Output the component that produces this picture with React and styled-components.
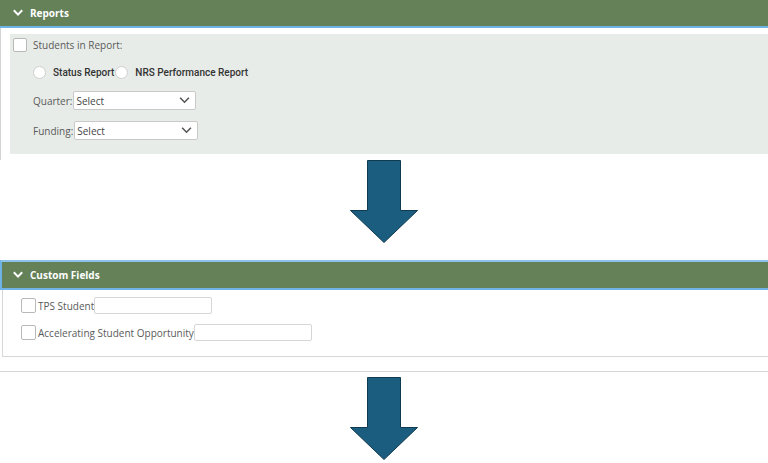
import styled, { createGlobalStyle } from 'styled-components'

const GlobalStyle = createGlobalStyle`
    *, *::before, *::after {
        box-sizing: border-box;
    }
    html, body {
        margin: 0;
        padding: 0;
        background: #ffffff;
    }
    body {
        font-family: "Open Sans", "Liberation Sans", sans-serif;
        color: #555;
    }
`

const Page = styled.div`
    width: 768px;
    height: 463px;
    overflow: hidden;
    display: flex;
    flex-direction: column;
`

const Section = styled.section`
    display: flex;
    flex-direction: column;
`

const Header = styled.div`
    height: ${(props) => (props.framed ? 30 : 28)}px;
    display: flex;
    align-items: center;
    gap: 7px;
    padding-left: ${(props) => (props.framed ? 11 : 13)}px;
    background-color: #648158;
    color: #ffffff;
    font-size: 10px;
    font-weight: 700;
    border-bottom: 2px solid #6fb3e6;
    border-top: ${(props) => (props.framed ? '2px solid #8cc2ea' : 'none')};
    border-left: ${(props) => (props.framed ? '2px solid #6fb3e6' : 'none')};
`

const ReportsBody = styled.div`
    height: 132px;
    padding: 6px 0 0 9px;
    border-left: 1px solid #d4d4d4;
`

const Panel = styled.div`
    background-color: #e8ece8;
    padding: 3px 0 14px 3px;
    display: flex;
    flex-direction: column;
`

const Row = styled.div`
    display: flex;
    align-items: center;
    height: ${(props) => props.h || 19}px;
    margin-top: ${(props) => props.mt || 0}px;
    padding-left: ${(props) => props.indent || 0}px;
    gap: ${(props) => props.gap || 0}px;
`

const Check = styled.span`
    width: ${(props) => props.size || 14}px;
    height: ${(props) => props.size || 14}px;
    background: #ffffff;
    border: 1px solid #b9b9b9;
    border-radius: 2px;
    flex-shrink: 0;
`

const Label = styled.span`
    font-size: 10px;
    color: #5a5a5a;
    white-space: nowrap;
    margin-left: ${(props) => props.ml || 0}px;
`

const Radio = styled.span`
    width: 13px;
    height: 13px;
    border-radius: 50%;
    background: #ffffff;
    border: 1px solid #cfcfcf;
    flex-shrink: 0;
`

const RadioLabel = styled.span`
    font-family: Roboto, "Liberation Sans", sans-serif;
    font-size: 10px;
    font-weight: 500;
    color: #333;
    margin: 0 1px 0 7px;
    white-space: nowrap;
`

const Select = styled.div`
    width: ${(props) => props.w || 123}px;
    height: 19px;
    background: #ffffff;
    border: 1px solid #c9c9c9;
    border-radius: 2px;
    display: flex;
    align-items: center;
    justify-content: space-between;
    padding: 0 5px 0 2px;
    font-size: 10px;
    color: #444;
`

const ArrowBox = styled.div`
    display: flex;
    justify-content: center;
    align-items: flex-start;
    height: ${(props) => props.h}px;
    margin-top: ${(props) => props.mt || 0}px;
`

const CustomBody = styled.div`
    height: 67px;
    margin-left: 2px;
    border-left: 1px solid #d8d8d8;
    border-bottom: 1px solid #d8d8d8;
    padding: 7px 0 0 18px;
    display: flex;
    flex-direction: column;
    gap: 10px;
`

const TextInput = styled.span`
    width: 118px;
    height: 17px;
    background: #ffffff;
    border: 1px solid #d6d6d6;
    border-radius: 2px;
`

const Divider = styled.div`
    margin-top: 14px;
    height: 1px;
    flex-shrink: 0;
    background: #d6d6d6;
`

const Chevron = ({ size = 10, color = '#fff', width = 2 }) => (
    <svg width={size} height={size} viewBox="0 0 10 10">
        <path d="M1.5 3 L5 6.6 L8.5 3" fill="none" stroke={color} strokeWidth={width} strokeLinecap="square" />
    </svg>
)

const Arrow = () => (
    <svg width="69" height="84" viewBox="0 0 69 84">
        <path d="M17.5 0.5 H50.5 V50.5 H67.5 L34 82.5 L0.5 50.5 H17.5 Z" fill="#1a5d7f" stroke="#0f3a50" strokeWidth="1" />
    </svg>
)

const App = () => {
    return (
        <Page>
            <GlobalStyle />
            <Section>
                <Header>
                    <Chevron />
                    Reports
                </Header>
                <ReportsBody>
                    <Panel>
                        <Row h={15} gap={6}>
                            <Check />
                            <Label>Students in Report:</Label>
                        </Row>
                        <Row mt={11} indent={20}>
                            <Radio />
                            <RadioLabel>Status Report</RadioLabel>
                            <Radio />
                            <RadioLabel>NRS Performance Report</RadioLabel>
                        </Row>
                        <Row mt={9} indent={20} gap={1}>
                            <Label>Quarter:</Label>
                            <Select>
                                Select
                                <Chevron size={11} color="#555" width={1.4} />
                            </Select>
                        </Row>
                        <Row mt={11} indent={20} gap={1}>
                            <Label>Funding:</Label>
                            <Select w={124}>
                                Select
                                <Chevron size={11} color="#555" width={1.4} />
                            </Select>
                        </Row>
                    </Panel>
                </ReportsBody>
            </Section>
            <ArrowBox h={100}>
                <Arrow />
            </ArrowBox>
            <Section>
                <Header framed>
                    <Chevron />
                    Custom Fields
                </Header>
                <CustomBody>
                    <Row h={17}>
                        <Check size={15} />
                        <Label ml={2}>TPS Student</Label>
                        <TextInput />
                    </Row>
                    <Row h={17}>
                        <Check size={15} />
                        <Label ml={2}>Accelerating Student Opportunity</Label>
                        <TextInput />
                    </Row>
                </CustomBody>
            </Section>
            <Divider />
            <ArrowBox h={86} mt={5}>
                <Arrow />
            </ArrowBox>
        </Page>
    )
}

export default App
